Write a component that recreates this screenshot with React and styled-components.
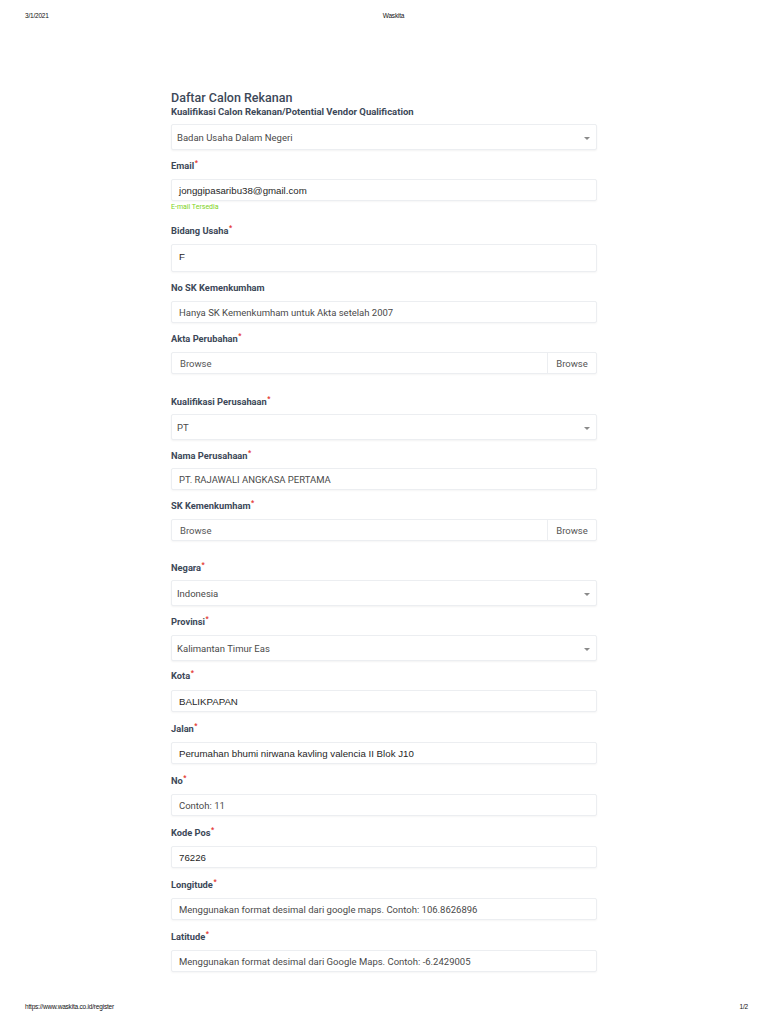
import React from 'react';
import styled, { createGlobalStyle } from 'styled-components';

const GlobalStyle = createGlobalStyle`
  html, body {
    margin: 0;
    padding: 0;
    background: #ffffff;
  }
  * {
    box-sizing: border-box;
  }
`;

const Page = styled.div`
  width: 768px;
  min-height: 1024px;
  display: flex;
  flex-direction: column;
  font-family: Roboto, "Liberation Sans", Arial, sans-serif;
`;

const PrintBar = styled.div`
  display: grid;
  grid-template-columns: 1fr auto 1fr;
  align-items: center;
  padding: 0 20px 0 25px;
  height: ${p => p.$height}px;
  margin-top: ${p => (p.$bottom ? 'auto' : '0')};
  font-family: "Liberation Sans", Arial, sans-serif;
  font-size: 6.5px;
  color: #111;
  letter-spacing: -0.2px;
`;

const PrintCenter = styled.span`
  padding-left: 14px;
`;

const PrintRight = styled.span`
  justify-self: end;
`;

const Form = styled.form`
  width: 426px;
  margin: 60px auto 0;
  display: flex;
  flex-direction: column;
`;

const Title = styled.h1`
  margin: 0 0 1px;
  font-size: 12.5px;
  line-height: 15px;
  font-weight: 500;
  color: #3c4858;
`;

const Subtitle = styled.h2`
  margin: 0 0 6px;
  font-size: 9.5px;
  line-height: 12px;
  font-weight: 700;
  color: #3c4858;
`;

const Field = styled.div`
  display: flex;
  flex-direction: column;
  margin-bottom: ${p => p.$space ?? 10}px;
`;

const Label = styled.label`
  font-size: 9.3px;
  line-height: 12px;
  height: 12px;
  font-weight: 700;
  color: #3c4858;
  margin-bottom: ${p => p.$gap ?? 7}px;
`;

const Req = styled.sup`
  color: #e3342f;
  font-size: 7px;
  font-weight: 700;
  line-height: 0;
  margin-left: 0.5px;
`;

const Box = styled.div`
  height: ${p => p.$height ?? 22}px;
  border: 1px solid #eceef1;
  border-radius: 2px;
  background: #fff;
  box-shadow: 0 1px 2px rgba(0, 0, 0, 0.04);
  display: flex;
  align-items: ${p => (p.$top ? 'flex-start' : 'center')};
  padding: ${p => (p.$top ? '6px 0 0 7px' : '0 0 0 7px')};
  font-family: ${p => (p.$value ? '"Liberation Sans", Arial, sans-serif' : 'Roboto, "Liberation Sans", Arial, sans-serif')};
  font-size: ${p => (p.$value ? 9.7 : 9.5)}px;
  color: ${p => (p.$value ? '#1f1f1f' : '#4a4a4a')};
`;

const SelectBox = styled.div`
  height: 26px;
  border: 1px solid #eceef1;
  border-radius: 2px;
  background: #fff;
  box-shadow: 0 1px 2px rgba(0, 0, 0, 0.05);
  display: flex;
  align-items: center;
  justify-content: space-between;
  padding: 0 6px 0 5px;
  font-size: 9.5px;
  color: #4a4a4a;
`;

const Caret = styled.span`
  width: 0;
  height: 0;
  border-left: 3px solid transparent;
  border-right: 3px solid transparent;
  border-top: 3.5px solid #8a8a8a;
  margin-top: 2px;
`;

const FileBox = styled.div`
  height: 22px;
  border: 1px solid #eceef1;
  border-radius: 2px;
  background: #fff;
  box-shadow: 0 1px 2px rgba(0, 0, 0, 0.04);
  display: flex;
  align-items: stretch;
  font-size: 9.5px;
  color: #555;
`;

const FileName = styled.span`
  flex: 1;
  display: flex;
  align-items: center;
  padding-left: 8px;
`;

const FileButton = styled.span`
  width: 49px;
  display: flex;
  align-items: center;
  justify-content: center;
  border-left: 1px solid #eceef1;
  color: #555;
`;

const Help = styled.div`
  font-size: 7px;
  line-height: 10px;
  color: #7ed321;
  margin-top: 1px;
`;

const Select = ({ value }) => (
  <SelectBox>
    <span>{value}</span>
    <Caret />
  </SelectBox>
);

const File = () => (
  <FileBox>
    <FileName>Browse</FileName>
    <FileButton>Browse</FileButton>
  </FileBox>
);

const Lbl = ({ children, required, gap }) => (
  <Label $gap={gap}>
    {children}
    {required && <Req>*</Req>}
  </Label>
);

export default function App() {
  return (
    <Page>
      <GlobalStyle />
      <PrintBar $height={30}>
        <span>3/1/2021</span>
        <PrintCenter>Waskita</PrintCenter>
        <span />
      </PrintBar>

      <Form>
        <Title>Daftar Calon Rekanan</Title>
        <Subtitle>Kualifikasi Calon Rekanan/Potential Vendor Qualification</Subtitle>

        <Field>
          <Select value="Badan Usaha Dalam Negeri" />
        </Field>

        <Field $space={13}>
          <Lbl required>Email</Lbl>
          <Box $value>jonggipasaribu38@gmail.com</Box>
          <Help>E-mail Tersedia</Help>
        </Field>

        <Field>
          <Lbl required>Bidang Usaha</Lbl>
          <Box $value $top $height={28}>F</Box>
        </Field>

        <Field>
          <Lbl>No SK Kemenkumham</Lbl>
          <Box>Hanya SK Kemenkumham untuk Akta setelah 2007</Box>
        </Field>

        <Field $space={22}>
          <Lbl required>Akta Perubahan</Lbl>
          <File />
        </Field>

        <Field>
          <Lbl required gap={6}>Kualifikasi Perusahaan</Lbl>
          <Select value="PT" />
        </Field>

        <Field>
          <Lbl required gap={6}>Nama Perusahaan</Lbl>
          <Box>PT. RAJAWALI ANGKASA PERTAMA</Box>
        </Field>

        <Field $space={21}>
          <Lbl required>SK Kemenkumham</Lbl>
          <File />
        </Field>

        <Field>
          <Lbl required gap={6}>Negara</Lbl>
          <Select value="Indonesia" />
        </Field>

        <Field $space={9}>
          <Lbl required>Provinsi</Lbl>
          <Select value="Kalimantan Timur Eas" />
        </Field>

        <Field $space={11}>
          <Lbl required gap={8}>Kota</Lbl>
          <Box $value>BALIKPAPAN</Box>
        </Field>

        <Field $space={11}>
          <Lbl required>Jalan</Lbl>
          <Box $value>Perumahan bhumi nirwana kavling valencia II Blok J10</Box>
        </Field>

        <Field $space={11}>
          <Lbl required>No</Lbl>
          <Box>Contoh: 11</Box>
        </Field>

        <Field $space={11}>
          <Lbl required>Kode Pos</Lbl>
          <Box $value>76226</Box>
        </Field>

        <Field $space={11}>
          <Lbl required>Longitude</Lbl>
          <Box>Menggunakan format desimal dari google maps. Contoh: 106.8626896</Box>
        </Field>

        <Field>
          <Lbl required>Latitude</Lbl>
          <Box>Menggunakan format desimal dari Google Maps. Contoh: -6.2429005</Box>
        </Field>
      </Form>

      <PrintBar $height={36} $bottom>
        <span>https://www.waskita.co.id/register</span>
        <span />
        <PrintRight>1/2</PrintRight>
      </PrintBar>
    </Page>
  );
}
